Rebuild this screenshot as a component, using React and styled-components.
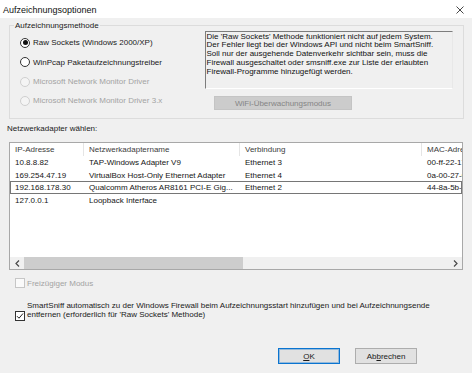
import React from "react";
import styled, { createGlobalStyle } from "styled-components";

const Global = createGlobalStyle`
  html, body { margin: 0; padding: 0; background: #ffffff; }
  body {
    font-family: "Liberation Sans", Arial, sans-serif;
    font-size: 8px;
    color: #1a1a1a;
  }
  * { box-sizing: border-box; }
`;

const Window = styled.div`
  width: 472px;
  height: 373px;
  background: #f0f0f0;
  display: flex;
  flex-direction: column;
  overflow: hidden;
`;

const TitleBar = styled.div`
  height: 18px;
  flex: none;
  background: #ffffff;
  display: flex;
  align-items: center;
  justify-content: space-between;
  padding: 1px 8px 0 3px;
  font-size: 9px;
  color: #111;
`;

const Body = styled.div`
  flex: 1;
  display: flex;
  flex-direction: column;
  padding: 0 0 0 7px;
`;

const Group = styled.fieldset`
  margin: 1px 0 0 2px;
  padding: 0;
  min-width: 0;
  width: 455px;
  height: 100px;
  border: 1px solid #dcdcdc;
  display: flex;
`;

const Legend = styled.legend`
  margin-left: 4px;
  padding: 2px 1px 0;
  line-height: 10px;
  font-size: 8px;
  color: #1a1a1a;
`;

const RadioCol = styled.div`
  width: 195px;
  padding: 2.33px 0 0 10px;
  display: flex;
  flex-direction: column;
`;

const RadioRow = styled.div`
  height: 19.33px;
  display: flex;
  align-items: center;
  gap: 3px;
  color: ${(p) => (p.$disabled ? "#a3a3a3" : "#1a1a1a")};
  white-space: nowrap;
`;

const Circle = styled.span`
  flex: none;
  width: 10px;
  height: 10px;
  border-radius: 50%;
  border: 1px solid ${(p) => (p.$disabled ? "#cfcfcf" : "#333333")};
  background: ${(p) => (p.$disabled ? "#f4f4f4" : "#ffffff")};
  display: flex;
  align-items: center;
  justify-content: center;
  &::after {
    content: "";
    width: 5px;
    height: 5px;
    border-radius: 50%;
    background: ${(p) => (p.$checked ? "#111" : "transparent")};
  }
`;

const InfoCol = styled.div`
  display: flex;
  flex-direction: column;
  align-items: flex-start;
`;

const InfoBox = styled.div`
  width: 248px;
  height: 58px;
  border-top: 1px solid #7d7d7d;
  border-left: 1px solid #7d7d7d;
  border-right: 1px solid #e8e8e8;
  border-bottom: 1px solid #ffffff;
  padding: 0.5px 0 0 0.5px;
  line-height: 8.8px;
  color: #111;
  white-space: nowrap;
`;

const WideButton = styled.button`
  margin: 7px 0 0 9px;
  width: 138px;
  height: 14px;
  padding: 0;
  border: 1px solid #c4c4c4;
  background: #cccccc;
  color: #858585;
  font: inherit;
  font-size: 8px;
`;

const SectionLabel = styled.div`
  margin-top: 5px;
  line-height: 10px;
  color: #1a1a1a;
`;

const ListView = styled.div`
  margin: 8px 0 0 2px;
  width: 454px;
  height: 128px;
  border: 1px solid #a8a8a8;
  background: #ffffff;
  display: flex;
  flex-direction: column;
  overflow: hidden;
`;

const Grid = styled.div`
  display: grid;
  grid-template-columns: 74px 156px 182px 1fr;
  height: ${(p) => p.$h}px;
  align-items: center;
  flex: none;
  ${(p) => (p.$focus ? "outline: 1px solid #767676; outline-offset: -1px;" : "")}
`;

const HeadCell = styled.div`
  height: 100%;
  display: flex;
  align-items: center;
  padding-left: 5px;
  color: #3c3c3c;
  white-space: nowrap;
  overflow: hidden;
  border-right: ${(p) => (p.$last ? "none" : "1px solid #e5e5e5")};
`;

const Cell = styled.div`
  padding-left: 5px;
  white-space: nowrap;
  overflow: hidden;
  color: #151515;
`;

const Filler = styled.div`
  flex: 1;
`;

const HScroll = styled.div`
  height: 12px;
  flex: none;
  display: flex;
  background: #f0f0f0;
`;

const ArrowBtn = styled.div`
  width: 14px;
  display: flex;
  align-items: center;
  justify-content: center;
`;

const Thumb = styled.div`
  width: 219px;
  background: #cdcdcd;
`;

const CheckRow = styled.div`
  display: flex;
  align-items: ${(p) => (p.$top ? "flex-start" : "center")};
  gap: 2px;
  margin-top: ${(p) => p.$mt}px;
  padding-left: 8px;
  min-height: 14px;
  color: ${(p) => (p.$disabled ? "#a3a3a3" : "#1a1a1a")};
`;

const Box = styled.span`
  flex: none;
  width: 10px;
  height: 10px;
  margin-top: ${(p) => p.$mt || 0}px;
  border: 1px solid ${(p) => (p.$disabled ? "#c6c6c6" : "#333333")};
  background: ${(p) => (p.$disabled ? "#fafafa" : "#ffffff")};
  display: flex;
  align-items: center;
  justify-content: center;
`;

const CheckText = styled.div`
  line-height: 9px;
  white-space: nowrap;
`;

const ButtonRow = styled.div`
  display: flex;
  justify-content: flex-end;
  gap: 15px;
  padding-right: 55px;
  margin-top: 27.5px;
`;

const DlgButton = styled.button`
  width: 62px;
  height: 16px;
  padding: 0;
  font: inherit;
  font-size: 8px;
  color: #1a1a1a;
  background: #e1e1e1;
  border: 1px solid ${(p) => (p.$default ? "#0a74d0" : "#adadad")};
  box-shadow: ${(p) => (p.$default ? "inset 0 0 0 1px rgba(10,116,208,0.35)" : "none")};
  u { text-decoration: underline; }
`;

const columns = ["IP-Adresse", "Netzwerkadaptername", "Verbindung", "MAC-Adresse"];
const rows = [
  ["10.8.8.82", "TAP-Windows Adapter V9", "Ethernet 3", "00-ff-22-17-5a-11"],
  ["169.254.47.19", "VirtualBox Host-Only Ethernet Adapter", "Ethernet 4", "0a-00-27-00-00-04"],
  ["192.168.178.30", "Qualcomm Atheros AR8161 PCI-E Gig...", "Ethernet 2", "44-8a-5b-a2-10-3c"],
  ["127.0.0.1", "Loopback Interface", "", ""],
];

const Chevron = ({ dir }) => (
  <svg width="5" height="7" viewBox="0 0 5 7">
    <path
      d={dir === "left" ? "M4 0.5 L1 3.5 L4 6.5" : "M1 0.5 L4 3.5 L1 6.5"}
      fill="none"
      stroke="#4a4a4a"
      strokeWidth="1.2"
    />
  </svg>
);

const Tick = () => (
  <svg width="8" height="8" viewBox="0 0 8 8">
    <path d="M1 4.2 L3 6.2 L7 1.5" fill="none" stroke="#222" strokeWidth="1" />
  </svg>
);

const CloseIcon = () => (
  <svg width="8" height="8" viewBox="0 0 8 8">
    <path d="M0.5 0.5 L7.5 7.5 M7.5 0.5 L0.5 7.5" stroke="#333" strokeWidth="0.9" />
  </svg>
);

export default function App() {
  return (
    <>
      <Global />
      <Window>
        <TitleBar>
          <span>Aufzeichnungsoptionen</span>
          <CloseIcon />
        </TitleBar>
        <Body>
          <Group>
            <Legend>Aufzeichnungsmethode</Legend>
            <RadioCol>
              <RadioRow>
                <Circle $checked />
                Raw Sockets (Windows 2000/XP)
              </RadioRow>
              <RadioRow>
                <Circle />
                WinPcap Paketaufzeichnungstreiber
              </RadioRow>
              <RadioRow $disabled>
                <Circle $disabled />
                Microsoft Network Monitor Driver
              </RadioRow>
              <RadioRow $disabled>
                <Circle $disabled />
                Microsoft Network Monitor Driver 3.x
              </RadioRow>
            </RadioCol>
            <InfoCol>
              <InfoBox>
                Die 'Raw Sockets' Methode funktioniert nicht auf jedem System.
                <br />
                Der Fehler liegt bei der Windows API und nicht beim SmartSniff.
                <br />
                Soll nur der ausgehende Datenverkehr sichtbar sein, muss die
                <br />
                Firewall ausgeschaltet oder smsniff.exe zur Liste der erlaubten
                <br />
                Firewall-Programme hinzugefügt werden.
              </InfoBox>
              <WideButton disabled>WiFi-Überwachungsmodus</WideButton>
            </InfoCol>
          </Group>

          <SectionLabel>Netzwerkadapter wählen:</SectionLabel>

          <ListView>
            <Grid $h={13}>
              {columns.map((c, i) => (
                <HeadCell key={c} $last={i === columns.length - 1}>
                  {c}
                </HeadCell>
              ))}
            </Grid>
            {rows.map((r, i) => (
              <Grid key={r[0]} $h={12.7} $focus={i === 2}>
                {r.map((v, j) => (
                  <Cell key={j}>{v}</Cell>
                ))}
              </Grid>
            ))}
            <Filler />
            <HScroll>
              <ArrowBtn>
                <Chevron dir="left" />
              </ArrowBtn>
              <Thumb />
              <Filler />
              <ArrowBtn>
                <Chevron dir="right" />
              </ArrowBtn>
            </HScroll>
          </ListView>

          <CheckRow $mt={6} $disabled>
            <Box $disabled />
            <CheckText>Freizügiger Modus</CheckText>
          </CheckRow>

          <CheckRow $mt={10.5} $top>
            <Box $mt={10}>
              <Tick />
            </Box>
            <CheckText>
              SmartSniff automatisch zu der Windows Firewall beim Aufzeichnungsstart hinzufügen und bei Aufzeichnungsende
              <br />
              entfernen (erforderlich für 'Raw Sockets' Methode)
            </CheckText>
          </CheckRow>

          <ButtonRow>
            <DlgButton $default>
              <u>O</u>K
            </DlgButton>
            <DlgButton>
              Ab<u>b</u>rechen
            </DlgButton>
          </ButtonRow>
        </Body>
      </Window>
    </>
  );
}
